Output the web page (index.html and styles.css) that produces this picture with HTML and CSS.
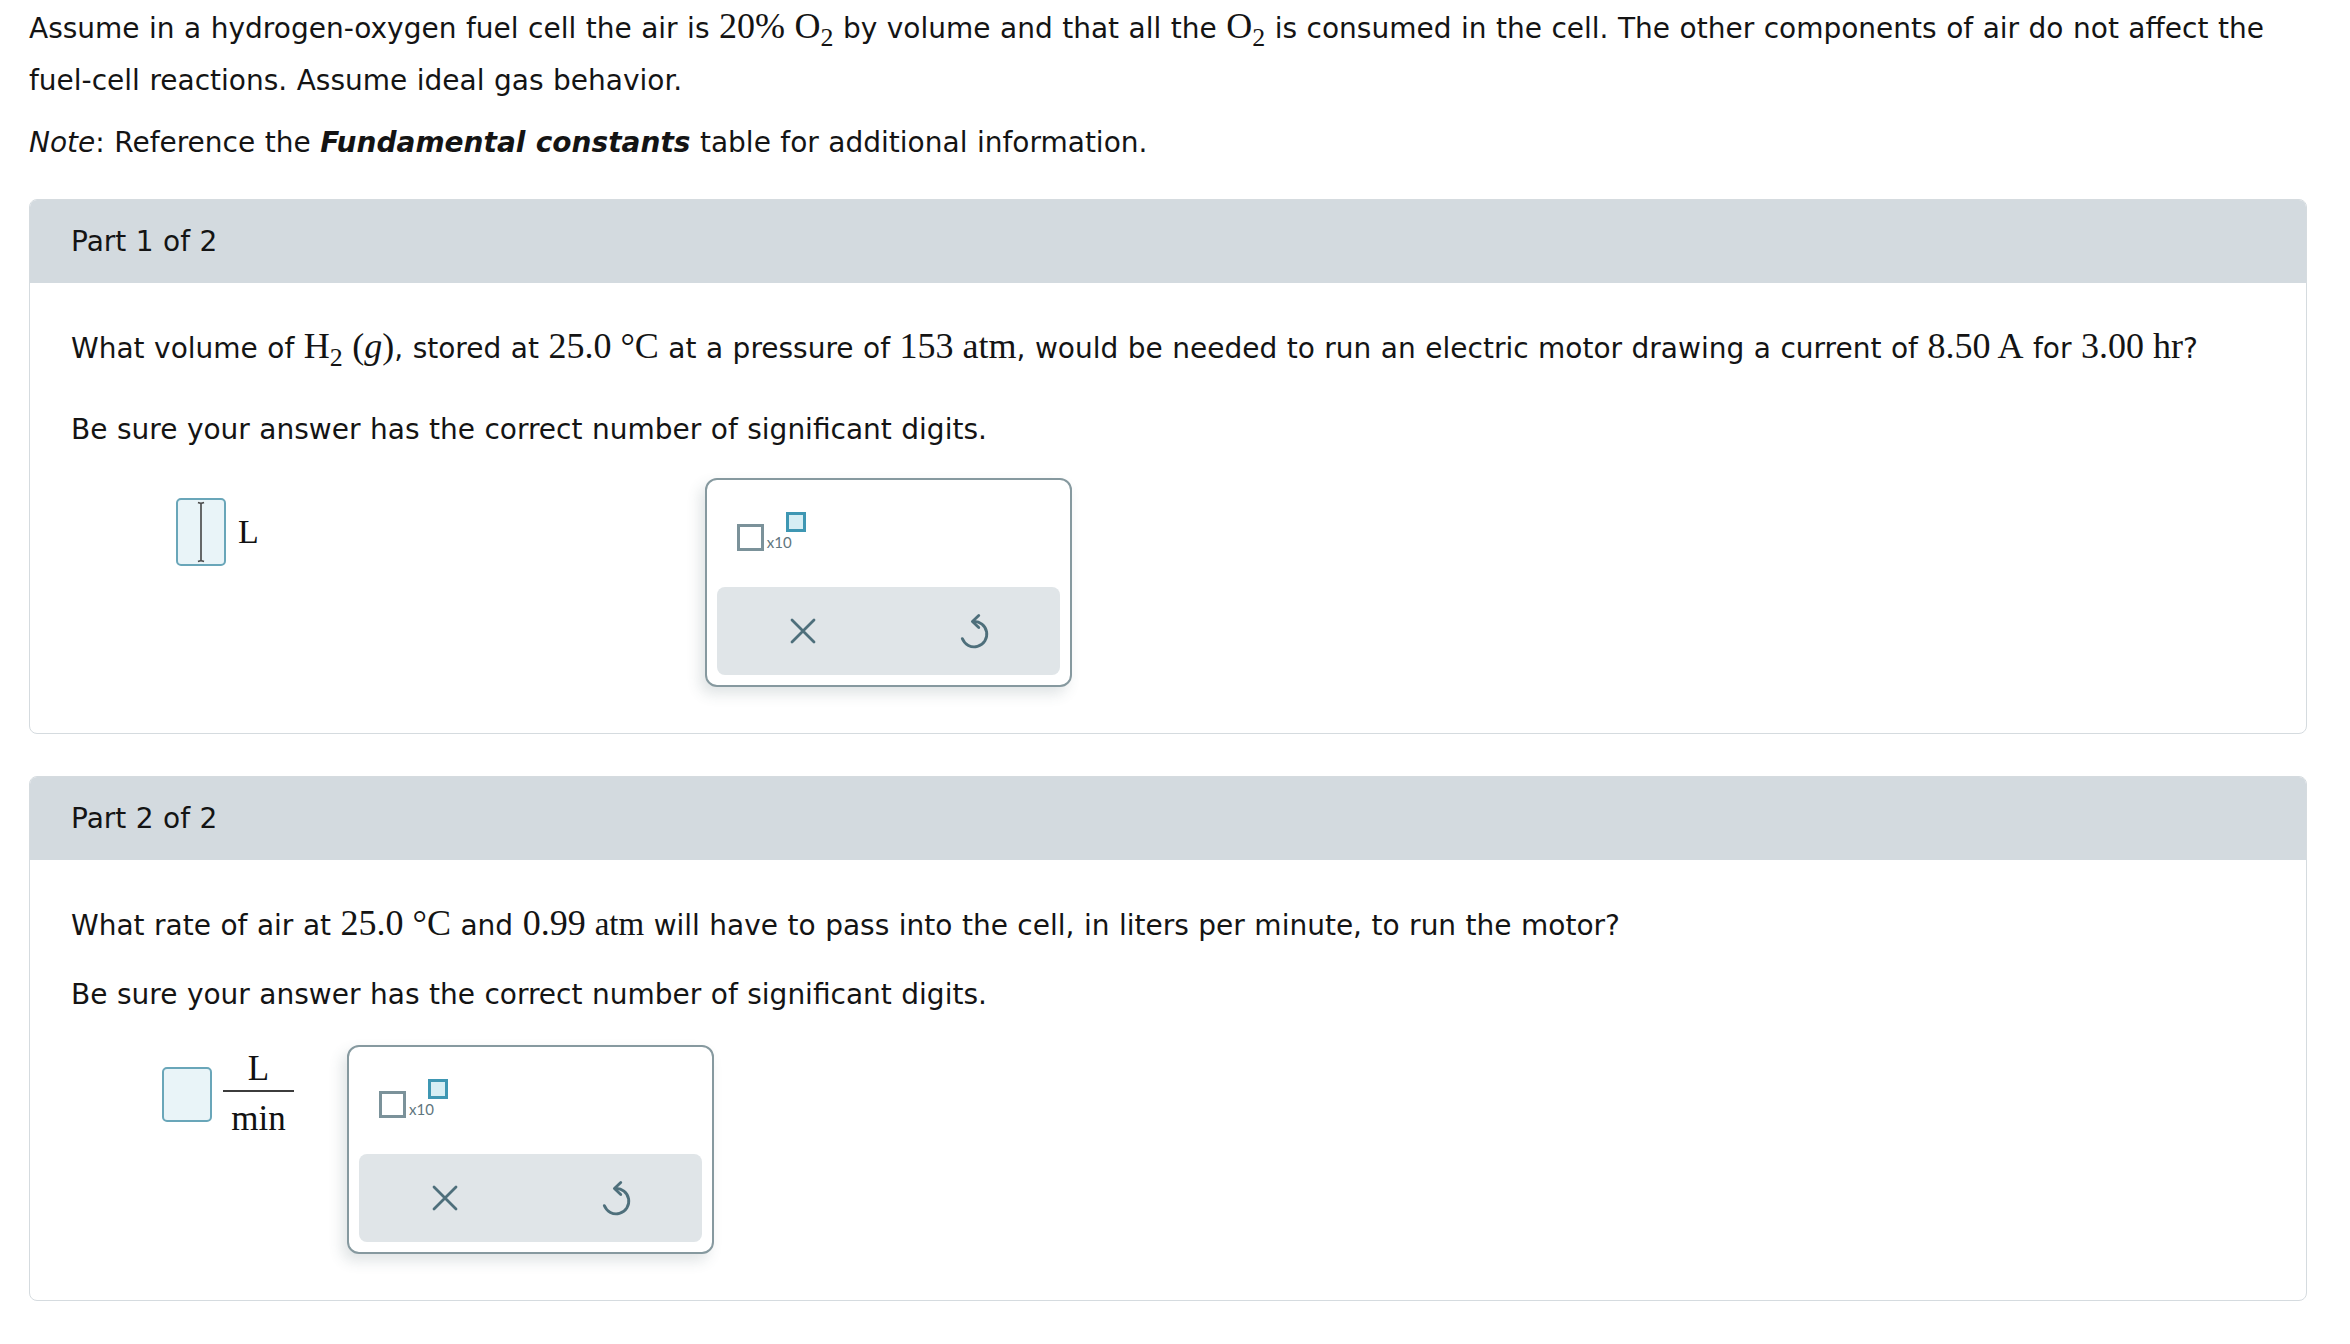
FILE: index.html
```html
<!DOCTYPE html>
<html lang="en">
<head>
<meta charset="utf-8">
<title>Fuel cell question</title>
<link rel="stylesheet" href="styles.css">
</head>
<body>
<div class="page">
  <div class="intro">
    <p class="lead">Assume in a hydrogen-oxygen fuel cell the air is <span class="m">20%</span> <span class="m">O<sub class="ms">2</sub></span> by volume and that all the <span class="m">O<sub class="ms">2</sub></span> is consumed in the cell. The other components of air do not affect the <span class="nw">fuel-cell</span> reactions. Assume ideal gas behavior.</p>
    <p class="note"><em>Note</em>: Reference the <strong><em>Fundamental constants</em></strong> table for additional information.</p>
  </div>

  <section class="part">
    <div class="part-head">Part 1 of 2</div>
    <div class="part-body">
      <p class="q q-tall">What volume of <span class="m">H<sub class="ms">2</sub></span> <span class="m">(<i>g</i>)</span>, stored at <span class="m">25.0 °C</span> at a pressure of <span class="m">153 atm</span>, would be needed to run an electric motor drawing a current of <span class="m">8.50 A</span> for <span class="m">3.00 hr</span>?</p>
      <p class="q">Be sure your answer has the correct number of significant digits.</p>
      <div class="answer-row">
        <div class="ans ans-one">
          <div class="field field-tall">
            <svg class="caret" width="10" height="62" viewBox="0 0 10 62"><path d="M5 3 V59" stroke="#444" stroke-width="1.6"/><path d="M2 1.5 Q5 3 8 1.5 M2 60.5 Q5 59 8 60.5" stroke="#444" stroke-width="1.4" fill="none"/></svg>
          </div>
          <span class="unit">L</span>
        </div>
        <div class="pad">
          <div class="pad-top">
            <div class="sci">
              <span class="sq-base"></span><span class="x10">x10</span><span class="sq-exp"></span>
            </div>
          </div>
          <div class="pad-bar">
            <div class="pad-btn">
              <svg width="26" height="26" viewBox="0 0 26 26"><path d="M2 2 L24 24 M24 2 L2 24" stroke="#4e6f7b" stroke-width="2.8" stroke-linecap="round"/></svg>
            </div>
            <div class="pad-btn">
              <svg width="38" height="38" viewBox="0 0 24 24"><path d="M15 2.2 L11 6 L15 9.8" stroke="#4e6f7b" stroke-width="1.8" fill="none" stroke-linecap="round" stroke-linejoin="round"/><path d="M11.5 6 A8 8 0 1 1 4.6 16.8" stroke="#4e6f7b" stroke-width="1.8" fill="none" stroke-linecap="round"/></svg>
            </div>
          </div>
        </div>
      </div>
    </div>
  </section>

  <section class="part">
    <div class="part-head">Part 2 of 2</div>
    <div class="part-body">
      <p class="q">What rate of air at <span class="m">25.0 °C</span> and <span class="m">0.99 <span class="mu">atm</span></span> will have to pass into the cell, in liters per minute, to run the motor?</p>
      <p class="q">Be sure your answer has the correct number of significant digits.</p>
      <div class="answer-row answer-row-low">
        <div class="ans ans-two">
          <div class="field field-short"></div>
          <div class="frac">
            <span class="frac-num">L</span>
            <span class="frac-bar"></span>
            <span class="frac-den">min</span>
          </div>
        </div>
        <div class="pad">
          <div class="pad-top">
            <div class="sci">
              <span class="sq-base"></span><span class="x10">x10</span><span class="sq-exp"></span>
            </div>
          </div>
          <div class="pad-bar">
            <div class="pad-btn">
              <svg width="26" height="26" viewBox="0 0 26 26"><path d="M2 2 L24 24 M24 2 L2 24" stroke="#4e6f7b" stroke-width="2.8" stroke-linecap="round"/></svg>
            </div>
            <div class="pad-btn">
              <svg width="38" height="38" viewBox="0 0 24 24"><path d="M15 2.2 L11 6 L15 9.8" stroke="#4e6f7b" stroke-width="1.8" fill="none" stroke-linecap="round" stroke-linejoin="round"/><path d="M11.5 6 A8 8 0 1 1 4.6 16.8" stroke="#4e6f7b" stroke-width="1.8" fill="none" stroke-linecap="round"/></svg>
            </div>
          </div>
        </div>
      </div>
    </div>
  </section>
</div>
</body>
</html>
```

FILE: styles.css
```css
html, body {
  margin: 0;
  padding: 0;
  background: #ffffff;
}

body {
  font-family: "DejaVu Sans", Verdana, sans-serif;
  font-size: 28px;
  word-spacing: 0.6px;
  color: #141414;
}

.page {
  padding: 3px 43px 40px 29px;
}

.intro p {
  margin: 0;
  line-height: 52px;
}

.intro .note {
  margin-top: 10px;
}

.nw {
  white-space: nowrap;
}

.m {
  font-family: "Liberation Serif", "Times New Roman", serif;
  font-size: 36px;
  line-height: 1;
  word-spacing: 0;
}

.mu {
  font-size: 33px;
}

.ms {
  font-size: 0.72em;
  vertical-align: -0.32em;
  line-height: 0;
}

.part {
  margin-top: 30px;
  border: 1px solid #d5dbdf;
  border-radius: 8px;
  overflow: hidden;
}

.part + .part {
  margin-top: 42px;
}

.part-head {
  height: 83px;
  background: #d3dadf;
  padding-left: 41px;
  display: flex;
  align-items: center;
  color: #141414;
}

.part-body {
  padding: 40px 42px 46px 41px;
}

.q {
  margin: 0 0 17px;
  line-height: 52px;
}

.q-tall {
  margin-bottom: 29px;
}

.answer-row {
  display: flex;
  align-items: flex-start;
  margin-top: 22px;
}

.answer-row-low {
  margin-top: 24px;
}

.ans {
  display: flex;
  align-items: center;
}

.ans-one {
  margin: 20px 446px 0 105px;
}

.ans-two {
  margin: 3px 53px 0 91px;
}

.field {
  box-sizing: border-box;
  width: 50px;
  border: 2px solid #69a6b9;
  border-radius: 5px;
  background: #e9f4f8;
  display: flex;
  align-items: center;
  justify-content: center;
}

.field-tall {
  height: 68px;
}

.field-short {
  height: 55px;
}

.unit {
  font-family: "Liberation Serif", "Times New Roman", serif;
  font-size: 34px;
  margin-left: 12px;
  color: #111;
}

.frac {
  display: flex;
  flex-direction: column;
  align-items: center;
  margin-left: 11px;
  width: 71px;
  font-family: "Liberation Serif", "Times New Roman", serif;
  font-size: 35px;
  color: #111;
}

.frac-num {
  line-height: 42px;
}

.frac-bar {
  align-self: stretch;
  height: 2px;
  background: #3c3c3c;
}

.frac-den {
  line-height: 42px;
  padding-top: 6px;
}

.pad {
  box-sizing: border-box;
  width: 367px;
  height: 209px;
  border: 2px solid #86999f;
  border-radius: 12px;
  background: #ffffff;
  padding: 10px;
  box-shadow: -5px 7px 14px rgba(60, 85, 95, 0.16);
  display: flex;
  flex-direction: column;
}

.pad-top {
  height: 97px;
  padding: 22px 0 0 20px;
  box-sizing: border-box;
}

.sci {
  display: flex;
  align-items: flex-end;
  height: 39px;
}

.sq-base {
  box-sizing: border-box;
  width: 27px;
  height: 27px;
  border: 3px solid #7b929a;
  background: #ffffff;
}

.x10 {
  font-family: Lato, "Open Sans", sans-serif;
  font-size: 15px;
  line-height: 15px;
  color: #5f767e;
  margin-left: 3px;
  padding-bottom: 1px;
}

.sq-exp {
  align-self: flex-start;
  box-sizing: border-box;
  width: 20px;
  height: 20px;
  border: 3px solid #3e97b3;
  background: #d6eef4;
  margin-left: -6px;
}

.pad-bar {
  flex: 1;
  display: flex;
  background: #e0e5e8;
  border-radius: 8px;
}

.pad-btn {
  flex: 1;
  display: flex;
  align-items: center;
  justify-content: center;
}
```
